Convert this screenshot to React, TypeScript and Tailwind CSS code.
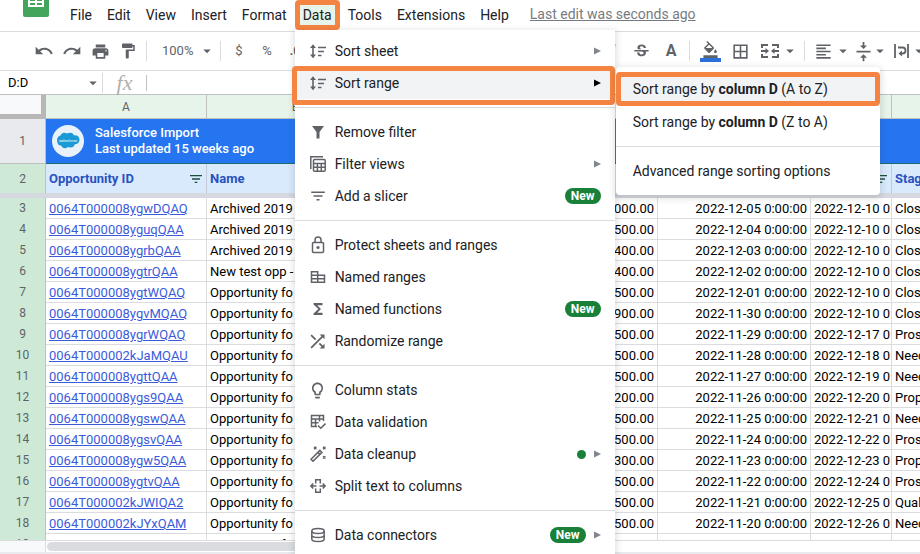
import type { ReactNode } from "react";
import {
  MdArrowDropDown,
  MdBorderAll,
  MdFilterList,
  MdFormatAlignLeft,
  MdFormatColorFill,
  MdFormatPaint,
  MdFunctions,
  MdOutlineLightbulb,
  MdPrint,
  MdRedo,
  MdShuffle,
  MdStrikethroughS,
  MdUndo,
  MdVerticalAlignCenter,
} from "react-icons/md";

const menus = ["File", "Edit", "View", "Insert", "Format", "Data", "Tools", "Extensions", "Help"];

const rows = [
  ["0064T000008ygwDQAQ", "Archived 2019", "1,000.00", "2022-12-05", "2022-12-10", "Closed Won"],
  ["0064T000008yguqQAA", "Archived 2019", "1,500.00", "2022-12-04", "2022-12-10", "Closed Won"],
  ["0064T000008ygrbQAA", "Archived 2019", "1,400.00", "2022-12-03", "2022-12-10", "Closed Won"],
  ["0064T000008ygtrQAA", "New test opp -", "1,400.00", "2022-12-02", "2022-12-10", "Closed Won"],
  ["0064T000008ygtWQAQ", "Opportunity fo", "1,500.00", "2022-12-01", "2022-12-10", "Closed Won"],
  ["0064T000008ygvMQAQ", "Opportunity fo", "1,900.00", "2022-11-30", "2022-12-10", "Closed Won"],
  ["0064T000008ygrWQAQ", "Opportunity fo", "1,500.00", "2022-11-29", "2022-12-17", "Prospecting"],
  ["0064T000002kJaMQAU", "Opportunity fo", "1,500.00", "2022-11-28", "2022-12-18", "Needs Analysis"],
  ["0064T000008ygttQAA", "Opportunity fo", "1,500.00", "2022-11-27", "2022-12-19", "Needs Analysis"],
  ["0064T000008ygs9QAA", "Opportunity fo", "1,200.00", "2022-11-26", "2022-12-20", "Proposal"],
  ["0064T000008ygswQAA", "Opportunity fo", "1,500.00", "2022-11-25", "2022-12-21", "Needs Analysis"],
  ["0064T000008ygsvQAA", "Opportunity fo", "1,500.00", "2022-11-24", "2022-12-22", "Prospecting"],
  ["0064T000008ygw5QAA", "Opportunity fo", "1,300.00", "2022-11-23", "2022-12-23", "Proposal"],
  ["0064T000008ygtvQAA", "Opportunity fo", "1,500.00", "2022-11-22", "2022-12-24", "Prospecting"],
  ["0064T000002kJWIQA2", "Opportunity fo", "1,500.00", "2022-11-21", "2022-12-25", "Qualification"],
  ["0064T000002kJYxQAM", "Opportunity fo", "1,500.00", "2022-11-20", "2022-12-26", "Needs Analysis"],
];

function Drawing({ children }: { children: ReactNode }) {
  return (
    <svg width="16" height="16" viewBox="0 0 16 16" fill="none" stroke="currentColor" strokeWidth="1.5">
      {children}
    </svg>
  );
}

const sortIcon = (
  <Drawing>
    <path d="M3 3v10M8 4.500h8M8 8.500h6M8 12.500h3.500" strokeWidth="1.600" />
    <path d="M0 5l3-3.700L6 5zM0 11.500l3 3.700 3-3.700z" fill="currentColor" stroke="none" />
  </Drawing>
);

const funnelIcon = (
  <Drawing>
    <path d="M2 2h12L9.500 8v6.500h-3V8z" fill="currentColor" stroke="none" />
  </Drawing>
);

const filterViewsIcon = (
  <Drawing>
    <path d="M.8 13V.8H13" />
    <rect x="3.500" y="3.500" width="11.700" height="11.700" rx="1" />
    <path d="M3.500 7.500h11.700M3.500 11.300h11.700M7.400 7.500v7.700M11.300 7.500v7.700" />
  </Drawing>
);

const lockIcon = (
  <svg width="14" height="18" viewBox="0 0 14 18" fill="none" stroke="currentColor" strokeWidth="1.500">
    <rect x="1.500" y="6.500" width="11" height="10" rx="1" />
    <path d="M4 6.500V4a3 3 0 0 1 6 0v2.500" />
    <circle cx="7" cy="11.500" r="1.600" fill="currentColor" stroke="none" />
  </svg>
);

const namedRangesIcon = (
  <Drawing>
    <path d="M1.500 2.700h6.200v10.600H1.500zM7.700 6.200h6.800v7.100H7.700M1.500 6.200h6.200M1.500 9.700h13" />
  </Drawing>
);

const validationIcon = (
  <Drawing>
    <path d="M7 12.500H1.500v-11h12v5.500M1.500 5h12M1.500 8.700h7M5.500 5v7.500M9.500 1.500v6" />
    <path d="m8 11.500 2.800 2.800 4.700-4.700" />
  </Drawing>
);

const cleanupIcon = (
  <Drawing>
    <path d="m1 13.300 8.900-8.900 2 2L3 15.300zM7.900 6.400l2 2" />
    <path d="m4 .8 2.400 2.400M6.400.8 4 3.200M13 .8l2.400 2.400M15.400.8 13 3.200M13 10.200l2.400 2.400M15.400 10.200 13 12.600" strokeWidth="1.300" />
  </Drawing>
);

const splitIcon = (
  <Drawing>
    <path d="M5.700 5.500V1.700h4.600v3.800M5.700 10.500v3.800h4.600v-3.800M1 8h5.500M9.500 8H15M3.300 5.500.9 8l2.400 2.500M12.700 5.500 15.100 8l-2.400 2.500" />
  </Drawing>
);

const databaseIcon = (
  <Drawing>
    <ellipse cx="8" cy="4" rx="6.200" ry="2.500" />
    <path d="M1.800 4v8c0 1.400 2.800 2.500 6.200 2.500s6.200-1.100 6.200-2.500V4M1.800 8c0 1.400 2.800 2.500 6.200 2.500s6.200-1.100 6.200-2.500" />
  </Drawing>
);

type Item = { label: string; icon: ReactNode; arrow?: boolean; isNew?: boolean; dot?: boolean; active?: boolean };

const dataMenu: Item[][] = [
  [
    { label: "Sort sheet", icon: sortIcon, arrow: true },
    { label: "Sort range", icon: sortIcon, arrow: true, active: true },
  ],
  [
    { label: "Remove filter", icon: funnelIcon },
    { label: "Filter views", icon: filterViewsIcon, arrow: true },
    { label: "Add a slicer", icon: <MdFilterList size={18} />, isNew: true },
  ],
  [
    { label: "Protect sheets and ranges", icon: lockIcon },
    { label: "Named ranges", icon: namedRangesIcon },
    { label: "Named functions", icon: <MdFunctions size={18} />, isNew: true },
    { label: "Randomize range", icon: <MdShuffle size={21} className="shrink-0" /> },
  ],
  [
    { label: "Column stats", icon: <MdOutlineLightbulb size={19} className="shrink-0" /> },
    { label: "Data validation", icon: validationIcon },
    { label: "Data cleanup", icon: cleanupIcon, arrow: true, dot: true },
    { label: "Split text to columns", icon: splitIcon },
  ],
  [{ label: "Data connectors", icon: databaseIcon, arrow: true, isNew: true }],
];

function SubMenu() {
  return (
    <div className="absolute top-0 left-full z-20 ml-px w-[264px] rounded bg-white pt-[5px] pb-2 text-[#202124] shadow-[0_2px_6px_2px_rgba(60,64,67,0.15)]">
      <button className="flex h-[34px] w-full items-center rounded-sm border-5 border-[#f58442] bg-[#f1f3f4] pl-3 whitespace-pre">
        Sort range by <b>column D</b> (A to Z)
      </button>
      <button className="flex h-8 w-full items-center pl-[17px] whitespace-pre">
        Sort range by <b>column D</b> (Z to A)
      </button>
      <hr className="my-2 border-[#dadce0]" />
      <button className="flex h-8 w-full items-center pl-[17px]">Advanced range sorting options</button>
    </div>
  );
}

function MenuItem({ item }: { item: Item }) {
  return (
    <li className="relative">
      <button className={`flex h-8 w-full items-center px-[14px] ${item.active ? "bg-[#f1f3f4]" : ""}`}>
        <span className="mr-2 flex w-[18px] justify-center text-[#5f6368]">{item.icon}</span>
        <span className="flex-1 text-left">{item.label}</span>
        {item.isNew && (
          <span className="h-4 rounded-full bg-[#188038] px-[6px] text-[12px] leading-4 font-bold text-white">New</span>
        )}
        {item.dot && <span className="size-[9px] rounded-full bg-[#188038]" />}
        {item.arrow && (
          <svg width="7" height="8" viewBox="0 0 7 8" className={item.active ? "ml-2 text-black" : "ml-2 text-[#80868b]"}>
            <path d="M0 .5 7 4 0 7.500z" fill="currentColor" />
          </svg>
        )}
      </button>
      {item.active && (
        <>
          <span className="pointer-events-none absolute -top-px right-0 -bottom-[6px] -left-[3px] z-10 rounded-sm border-5 border-[#f58442]" />
          <SubMenu />
        </>
      )}
    </li>
  );
}

function DataMenu() {
  return (
    <div className="absolute top-full left-0 z-10 w-[320px] bg-white pt-[5px] pb-2 text-[14px] text-[#202124] shadow-[0_2px_6px_2px_rgba(60,64,67,0.15)]">
      {dataMenu.map((group, i) => (
        <div key={i}>
          {i > 0 && <hr className="my-2 border-[#dadce0]" />}
          <ul>
            {group.map((item) => (
              <MenuItem key={item.label} item={item} />
            ))}
          </ul>
        </div>
      ))}
    </div>
  );
}

function Header() {
  return (
    <header className="flex h-8 items-start border-b border-[#dadce0]">
      <svg width="26" height="17" viewBox="0 0 26 17" className="ml-[23px]" role="img" aria-label="Sheets">
        <path d="M0 0h26v15a2 2 0 0 1-2 2H2a2 2 0 0 1-2-2z" fill="#43a45b" />
        <path d="M5 0h16v7H5z" fill="#fff" />
        <path d="M7 0h5v1H7zM14 0h5v1h-5zM7 3h5v2H7zM14 3h5v2h-5z" fill="#43a45b" />
      </svg>
      <nav className="ml-[14px] flex gap-px text-[14px] text-[#202124]">
        {menus.map((name) =>
          name === "Data" ? (
            <div key={name} className="relative">
              <button className="h-[30px] rounded-sm border-5 border-[#f58442] bg-[#e6f4ea] px-[3px]">{name}</button>
              <DataMenu />
            </div>
          ) : (
            <button key={name} className="h-[30px] px-[7px]">
              {name}
            </button>
          ),
        )}
      </nav>
      <a href="#history" className="ml-[14px] text-[14px] leading-[29px] text-[#777b80] underline">
        Last edit was seconds ago
      </a>
    </header>
  );
}

function Separator() {
  return <span className="mx-1 h-5 w-px shrink-0 bg-[#dadce0]" />;
}

function Tool({ label, children }: { label: string; children: ReactNode }) {
  return (
    <button aria-label={label} className="flex h-7 w-7 shrink-0 items-center justify-center">
      {children}
    </button>
  );
}

function Arrow({ label }: { label: string }) {
  return (
    <button aria-label={label} className="mr-1 flex w-3 shrink-0 justify-center">
      <MdArrowDropDown size={18} className="shrink-0" />
    </button>
  );
}

function Toolbar() {
  return (
    <div className="flex h-[39px] items-center border-b border-[#dadce0] pl-[30px] text-[13px] text-[#5f6368]">
      <Tool label="Undo"><MdUndo size={20} /></Tool>
      <Tool label="Redo"><MdRedo size={20} /></Tool>
      <Tool label="Print"><MdPrint size={19} /></Tool>
      <Tool label="Paint format"><MdFormatPaint size={18} /></Tool>
      <Separator />
      <button className="flex w-[65px] shrink-0 items-center justify-between pl-[11px]">
        100% <MdArrowDropDown size={18} />
      </button>
      <Separator />
      <Tool label="Currency">$</Tool>
      <Tool label="Percent">%</Tool>
      <Tool label="Decrease decimals"><b>.0</b></Tool>
      <span className="w-[290px] shrink-0" />
      <Tool label="Italic"><i className="text-[17px] font-bold">I</i></Tool>
      <div className="flex shrink-0 items-center gap-[2px]">
        <Tool label="Strikethrough"><MdStrikethroughS size={19} /></Tool>
        <Tool label="Text color"><b className="text-[16px]">A</b></Tool>
      </div>
      <Separator />
      <div className="flex shrink-0 items-center gap-[2px] pl-[2px]">
        <Tool label="Fill color">
          <span className="flex flex-col items-center border-b-4 border-[#2b6fdb] px-[2px]">
            <MdFormatColorFill size={17} />
          </span>
        </Tool>
        <Tool label="Borders"><MdBorderAll size={19} /></Tool>
        <Tool label="Merge cells">
          <svg width="18" height="14" viewBox="0 0 18 14" fill="none" stroke="currentColor" strokeWidth="2">
            <path d="M1 4V1h6M11 1h6v3M1 10v3h6M11 13h6v-3M0 7h5M13 7h5" />
            <path d="M4.500 4 8 7l-3.500 3zM13.500 4 10 7l3.500 3z" fill="currentColor" stroke="none" />
          </svg>
        </Tool>
      </div>
      <Arrow label="Merge options" />
      <Separator />
      <Tool label="Horizontal align"><MdFormatAlignLeft size={19} /></Tool>
      <Arrow label="Horizontal align options" />
      <MdVerticalAlignCenter size={21} className="shrink-0" />
      <Arrow label="Vertical align options" />
      <svg width="15" height="14" viewBox="0 0 15 14" fill="none" stroke="currentColor" strokeWidth="1.800" className="mx-1 shrink-0">
        <path d="M1 0v14M14 0v14M4 3.500h4.500a2.700 2.700 0 0 1 0 6H7" />
        <path d="M8 6.500v6L4.500 9.500z" fill="currentColor" stroke="none" />
      </svg>
      <Arrow label="Text wrapping options" />
    </div>
  );
}

function FormulaBar() {
  return (
    <div className="flex h-6 items-center border-b border-[#c0c0c0] text-[13px]">
      <input aria-label="Name box" defaultValue="D:D" className="w-[84px] pl-2 text-black outline-none" />
      <MdArrowDropDown size={18} className="text-[#5f6368]" />
      <span className="h-5 w-px bg-[#dadce0]" />
      <span className="w-[43px] text-center font-['Liberation_Serif',serif] text-[22px] leading-5 text-[#b0b0b0] italic">fx</span>
      <span className="h-4 w-px bg-[#c0c0c0]" />
      <input aria-label="Formula" className="flex-1 px-2 outline-none" />
    </div>
  );
}

function HeadCell({ label, filter }: { label: string; filter?: boolean }) {
  return (
    <td className="border-r border-[#c3cbd6] pr-[2px] pl-[3px]">
      <div className="flex items-center justify-between">
        {label}
        {filter && <MdFilterList size={16} className="shrink-0 text-[#1d4d3c]" />}
      </div>
    </td>
  );
}

function Sheet() {
  const cell = "overflow-hidden border-r border-b border-[#dadce0] px-[3px] pt-px pb-0";
  return (
    <div className="min-h-0 flex-1 overflow-hidden">
      <table className="w-full table-fixed border-separate border-spacing-0 text-[13px] whitespace-nowrap">
        <colgroup>
          <col className="w-[46px]" />
          <col className="w-[161px]" />
          <col className="w-[178px]" />
          <col className="w-[136px]" />
          <col className="w-[137px]" />
          <col className="w-[153px]" />
          <col className="w-[81px]" />
          <col className="w-[120px]" />
        </colgroup>
        <thead>
          <tr className="h-6 bg-[#e6f4ea] text-[12px] text-[#5f6368]">
            <td className="border-r-5 border-b-5 border-[#b7b7b7] bg-[#f8f9fa]" />
            {["A", "B", "C", "D", "E", "F", "G"].map((letter) => (
              <th key={letter} className="overflow-hidden border-r border-b border-[#c0c0c0] p-0 font-normal">
                {letter}
              </th>
            ))}
          </tr>
        </thead>
        <tbody>
          <tr className="h-[45px] bg-[#2575f0] text-white">
            <th className="border-r border-b border-[#c0c0c0] bg-[#e8eaed] p-0 text-[12px] font-normal text-[#5f6368]">1</th>
            <td colSpan={7} className="border-b border-[#1a6a70] p-0">
              <div className="flex items-center gap-[11px] pl-[6px]">
                <svg width="32" height="32" viewBox="0 0 32 32" role="img" aria-label="salesforce">
                  <circle cx="16" cy="16" r="16" fill="#e9f2fb" />
                  <g fill="#1b9ad6">
                    <circle cx="9.500" cy="15" r="4.500" />
                    <circle cx="12.500" cy="12" r="4.300" />
                    <circle cx="18" cy="11.800" r="4" />
                    <circle cx="23" cy="14.800" r="4.500" />
                    <circle cx="18.500" cy="18" r="4.500" />
                    <circle cx="13" cy="19" r="4.200" />
                    <circle cx="9" cy="17" r="3.500" />
                  </g>
                  <text x="16" y="17" textAnchor="middle" fontSize="4" fontStyle="italic" fill="#fff">salesforce</text>
                </svg>
                <div className="text-[13px] leading-4 font-medium">
                  <p>Salesforce Import</p>
                  <p>Last updated 15 weeks ago</p>
                </div>
              </div>
            </td>
          </tr>
          <tr className="h-[29px] bg-[#d9eafd] font-bold text-[#2a52be]">
            <th className="border-r border-[#c0c0c0] bg-[#ceead6] p-0 text-[12px] font-normal text-[#5f6368]">2</th>
            <HeadCell label="Opportunity ID" filter />
            <HeadCell label="Name" />
            <HeadCell label="Type" />
            <HeadCell label="Amount" />
            <HeadCell label="Created" />
            <HeadCell label="Close" filter />
            <HeadCell label="Stage" filter />
          </tr>
          {/* frozen rows divider */}
          <tr className="h-[5px]">
            <td colSpan={8} className="bg-[#d5d8df] p-0" />
          </tr>
          {rows.map(([id, name, amount, created, close, stage], i) => (
            <tr key={id} className="h-[21px] leading-[19px]">
              <th className="border-r border-[#c0c0c0] bg-[#ceead6] p-0 text-[12px] font-normal text-[#5f6368]">{i + 3}</th>
              <td className={cell}>
                <a href={`#${id}`} className="text-[#3b5bdb] underline">{id}</a>
              </td>
              <td className={cell}>{name}</td>
              <td className={cell} />
              <td className={`${cell} text-right`}>{amount}</td>
              <td className={`${cell} text-right`}>{created} 0:00:00</td>
              <td className={cell}>{close} 0:00:00</td>
              <td className={cell}>{stage}</td>
            </tr>
          ))}
          <tr className="h-[21px] leading-[19px]">
            <th className="border-r border-[#c0c0c0] bg-[#ceead6] p-0 text-[12px] font-normal text-[#5f6368]">19</th>
            <td className={cell} />
            <td className={cell}>Opportunity fo</td>
            <td className={cell} />
            <td className={cell} />
            <td className={cell} />
            <td className={cell} />
            <td className={cell} />
          </tr>
        </tbody>
      </table>
    </div>
  );
}

export default function App() {
  return (
    <div className="flex h-screen flex-col overflow-hidden bg-white font-[Roboto,'Liberation_Sans',sans-serif]">
      <Header />
      <Toolbar />
      <FormulaBar />
      <Sheet />
      {/* Horizontal scrollbar */}
      <div className="flex h-3 shrink-0 border-t border-[#dadce0] bg-white">
        <span className="w-[46px] border-r border-[#dadce0] bg-[#f8f9fa]" />
        <span className="my-px ml-px w-1/2 rounded-full bg-[#dadce0]" />
      </div>
      <footer className="h-[2px] shrink-0 bg-[#e8eaed]" />
    </div>
  );
}
